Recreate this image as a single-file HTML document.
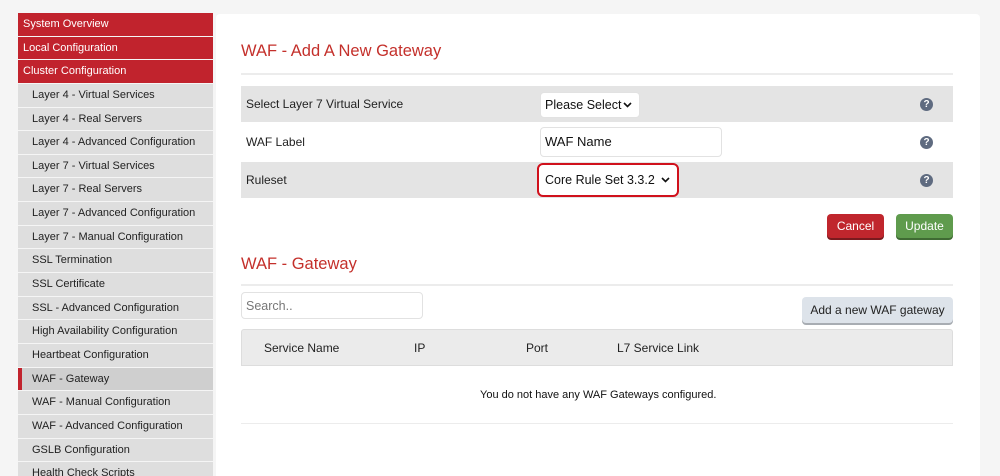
<!DOCTYPE html>
<html><head><style>
*{box-sizing:border-box;margin:0;padding:0}
html,body{width:1000px;height:476px;overflow:hidden}
body{background:#f5f5f5;font-family:"Liberation Sans",sans-serif;position:relative}
.sb{position:absolute;left:18px;top:13px;width:195px}
.it{height:22.65px;margin-bottom:1px;background:#dedede;color:#222;font-size:11px;line-height:23px;padding-left:14px}
.it.r{background:#c1232d;color:#fff;padding-left:5px}
.it.s{background:#cfcfcf;border-left:4px solid #c1232d;padding-left:10px}
.main{position:absolute;left:216px;top:14px;width:764px;height:470px;background:#fff;border-radius:4px}
.abs{position:absolute}
h2{position:absolute;font-weight:normal;color:#c4302b;font-size:16.5px}
.hr{position:absolute;left:25px;width:712px;height:2px;background:#ececec}
.row{position:absolute;left:25px;width:712px;font-size:12px;color:#222}
.lbl{position:absolute;left:5px}
.q{position:absolute;left:679px;width:13px;height:13px;border-radius:50%;background:#5f6b80;color:#fff;font-size:10px;font-weight:bold;text-align:center;line-height:13px}
.sel{position:absolute;background:#fff;border:1px solid #e2e2e2;border-radius:4px;font-size:13px;color:#111;padding-left:4px}
.chev{position:absolute;top:50%;margin-top:-3px;right:7px}
.btn{position:absolute;border-radius:4px;color:#fff;font-size:12px;text-align:center;line-height:24px}
</style></head><body>
<div class="sb">
<div class="it r">System Overview</div>
<div class="it r">Local Configuration</div>
<div class="it r">Cluster Configuration</div>
<div class="it">Layer 4 - Virtual Services</div>
<div class="it">Layer 4 - Real Servers</div>
<div class="it">Layer 4 - Advanced Configuration</div>
<div class="it">Layer 7 - Virtual Services</div>
<div class="it">Layer 7 - Real Servers</div>
<div class="it">Layer 7 - Advanced Configuration</div>
<div class="it">Layer 7 - Manual Configuration</div>
<div class="it">SSL Termination</div>
<div class="it">SSL Certificate</div>
<div class="it">SSL - Advanced Configuration</div>
<div class="it">High Availability Configuration</div>
<div class="it">Heartbeat Configuration</div>
<div class="it s">WAF - Gateway</div>
<div class="it">WAF - Manual Configuration</div>
<div class="it">WAF - Advanced Configuration</div>
<div class="it">GSLB Configuration</div>
<div class="it">Health Check Scripts</div>
</div>
<div class="main">
<h2 style="left:25px;top:28px">WAF - Add A New Gateway</h2>
<div class="hr" style="top:59px"></div>
<div class="row" style="top:72px;height:36px;background:#e4e4e4"><span class="lbl" style="top:11px">Select Layer 7 Virtual Service</span>
<div class="sel" style="left:299px;top:6px;width:100px;height:26px;line-height:24px;font-size:12.5px">Please Select<svg class="chev" width="9" height="6" viewBox="0 0 9 6"><path d="M1 1l3.5 3.5L8 1" fill="none" stroke="#111" stroke-width="1.6"/></svg></div><div class="q" style="top:12px">?</div></div>
<div class="row" style="top:108px;height:40px"><span class="lbl" style="top:13px">WAF Label</span>
<div class="sel" style="left:299px;top:5px;width:182px;height:30px;line-height:28px">WAF Name</div><div class="q" style="top:14px">?</div></div>
<div class="row" style="top:148px;height:36px;background:#e4e4e4"><span class="lbl" style="top:11px">Ruleset</span>
<div class="sel" style="left:296px;top:1px;width:142px;height:34px;line-height:30px;border:2px solid #d0111c;border-radius:6px;padding-left:6px;font-size:12.5px">Core Rule Set 3.3.2<svg class="chev" width="9" height="6" viewBox="0 0 9 6"><path d="M1 1l3.5 3.5L8 1" fill="none" stroke="#111" stroke-width="1.6"/></svg></div><div class="q" style="top:12px">?</div></div>
<div class="btn" style="left:611px;top:200px;width:57px;height:24px;background:#c0262d;box-shadow:0 2px 0 #7a1a1e">Cancel</div>
<div class="btn" style="left:680px;top:200px;width:57px;height:24px;background:#5f9b4d;box-shadow:0 2px 0 #3f6a33">Update</div>
<h2 style="left:25px;top:241px">WAF - Gateway</h2>
<div class="hr" style="top:270px"></div>
<div class="sel" style="left:25px;top:278px;width:182px;height:27px;line-height:26px;color:#777;font-size:12.5px">Search..</div>
<div class="btn" style="left:586px;top:283px;width:151px;height:26px;background:#dde3ea;color:#222;font-size:12px;line-height:26px;box-shadow:0 2px 0 #a8adb3">Add a new WAF gateway</div>
<div class="abs" style="left:25px;top:315px;width:712px;height:37px;background:#ebebeb;border:1px solid #ddd;border-radius:3px 3px 0 0;font-size:12px;color:#222">
<span class="abs" style="left:22px;top:11px">Service Name</span><span class="abs" style="left:172px;top:11px">IP</span><span class="abs" style="left:284px;top:11px">Port</span><span class="abs" style="left:375px;top:11px">L7 Service Link</span></div>
<div class="abs" style="left:264px;top:375px;font-size:11px;color:#111">You do not have any WAF Gateways configured.</div>
<div class="hr" style="top:409px;height:1px"></div>
</div>
</body></html>
